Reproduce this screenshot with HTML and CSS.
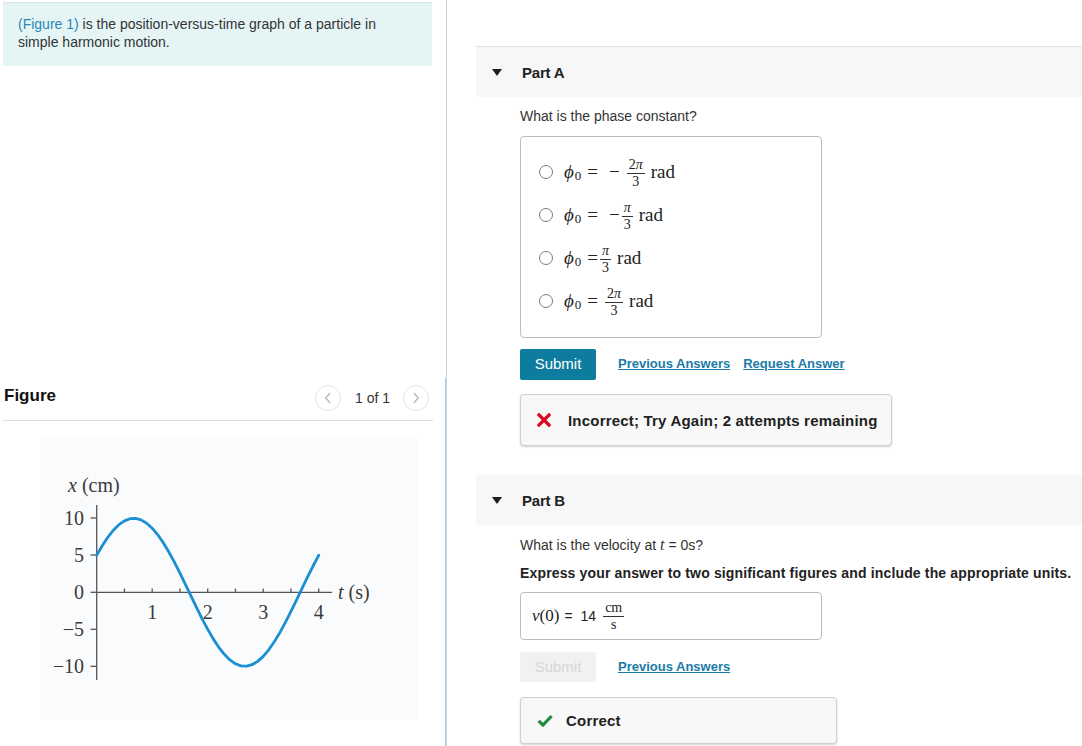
FILE: index.html
```html
<!DOCTYPE html>
<html lang="en">
<head>
<meta charset="utf-8">
<title>Simple harmonic motion</title>
<link rel="stylesheet" href="styles.css">
</head>
<body>
<div class="page">
  <aside class="left">
    <div class="intro"><a class="fig-link">(Figure 1)</a> is the position-versus-time graph of a particle in simple harmonic motion.</div>
    <section class="figure-pane">
      <div class="fig-head">
        <h2 class="fig-title">Figure</h2>
        <div class="pager">
          <span class="pbtn"><svg width="8" height="12" viewBox="0 0 8 12"><path d="M6 1L1.8 6L6 11" fill="none" stroke="#b9b9b9" stroke-width="1.4"/></svg></span>
          <span class="pcount">1 of 1</span>
          <span class="pbtn"><svg width="8" height="12" viewBox="0 0 8 12"><path d="M2 1L6.2 6L2 11" fill="none" stroke="#b9b9b9" stroke-width="1.4"/></svg></span>
        </div>
      </div>
      <div class="fig-img">
        <svg class="graph" width="378" height="283" viewBox="0 0 378 283">
          <g stroke="#555" stroke-width="1.3" fill="none">
            <line x1="56.7" y1="69" x2="56.7" y2="244"/>
            <line x1="56.7" y1="156.3" x2="292" y2="156.3"/>
            <line x1="50.5" y1="82" x2="56.7" y2="82"/>
            <line x1="50.5" y1="119" x2="56.7" y2="119"/>
            <line x1="50.5" y1="156.3" x2="56.7" y2="156.3"/>
            <line x1="50.5" y1="193.3" x2="56.7" y2="193.3"/>
            <line x1="50.5" y1="230.3" x2="56.7" y2="230.3"/>
            <line x1="84.45" y1="152.6" x2="84.45" y2="156.3"/>
            <line x1="112.2" y1="152.6" x2="112.2" y2="156.3"/>
            <line x1="139.95" y1="152.6" x2="139.95" y2="156.3"/>
            <line x1="167.7" y1="152.6" x2="167.7" y2="156.3"/>
            <line x1="195.45" y1="152.6" x2="195.45" y2="156.3"/>
            <line x1="223.2" y1="152.6" x2="223.2" y2="156.3"/>
            <line x1="250.95" y1="152.6" x2="250.95" y2="156.3"/>
            <line x1="278.7" y1="152.6" x2="278.7" y2="156.3"/>
          </g>
          <g class="glabel">
            <text x="44" y="89" text-anchor="end">10</text>
            <text x="44" y="126" text-anchor="end">5</text>
            <text x="44" y="163" text-anchor="end">0</text>
            <text x="44" y="200" text-anchor="end">−5</text>
            <text x="44" y="237" text-anchor="end">−10</text>
            <text x="112.2" y="183" text-anchor="middle">1</text>
            <text x="167.7" y="183" text-anchor="middle">2</text>
            <text x="223.2" y="183" text-anchor="middle">3</text>
            <text x="278.7" y="183" text-anchor="middle">4</text>
            <text x="28" y="56"><tspan font-style="italic">x</tspan> (cm)</text>
            <text x="298" y="163"><tspan font-style="italic">t</tspan> (s)</text>
          </g>
          <polyline fill="none" stroke="#1b8fd2" stroke-width="2.8" stroke-linejoin="round" stroke-linecap="round" points="56.7,119.3 62.25,109.73 67.8,101.31 73.35,94.24 78.9,88.7 84.45,84.82 90,82.71 95.55,82.4 101.1,83.92 106.65,87.21 112.2,92.21 117.75,98.79 123.3,106.79 128.85,116 134.4,126.2 139.95,137.15 145.5,148.57 151.05,160.17 156.6,171.69 162.15,182.82 167.7,193.3 173.25,202.87 178.8,211.29 184.35,218.36 189.9,223.9 195.45,227.78 201,229.89 206.55,230.2 212.1,228.68 217.65,225.39 223.2,220.39 228.75,213.81 234.3,205.81 239.85,196.6 245.4,186.4 250.95,175.45 256.5,164.03 262.05,152.43 267.6,140.91 273.15,129.78 278.7,119.3"/>
        </svg>
      </div>
    </section>
  </aside>

  <main class="right">
    <section class="part part-a">
      <div class="part-head"><span class="caret"></span><span class="part-title">Part A</span></div>
      <div class="part-body">
        <p class="question">What is the phase constant?</p>
        <div class="options">
          <label class="option"><span class="radio"></span>
            <span class="math"><span class="mi">ϕ</span><sub class="sub">0</sub><span class="mo">=</span><span class="mo">−</span><span class="frac"><span class="num">2<i>π</i></span><span class="den">3</span></span><span class="unit">rad</span></span>
          </label>
          <label class="option"><span class="radio"></span>
            <span class="math"><span class="mi">ϕ</span><sub class="sub">0</sub><span class="mo">=</span><span class="mo tight">−</span><span class="frac"><span class="num"><i>π</i></span><span class="den">3</span></span><span class="unit">rad</span></span>
          </label>
          <label class="option"><span class="radio"></span>
            <span class="math"><span class="mi">ϕ</span><sub class="sub">0</sub><span class="mo tight">=</span><span class="frac"><span class="num"><i>π</i></span><span class="den">3</span></span><span class="unit">rad</span></span>
          </label>
          <label class="option"><span class="radio"></span>
            <span class="math"><span class="mi">ϕ</span><sub class="sub">0</sub><span class="mo">=</span><span class="frac"><span class="num">2<i>π</i></span><span class="den">3</span></span><span class="unit">rad</span></span>
          </label>
        </div>
        <div class="actions">
          <button class="btn-submit">Submit</button>
          <a class="link">Previous Answers</a>
          <a class="link">Request Answer</a>
        </div>
        <div class="feedback feedback-wrong">
          <svg class="ficon" width="14" height="14" viewBox="0 0 14 14"><path d="M2 2L12 12M12 2L2 12" stroke="#dc0a1e" stroke-width="3.3" stroke-linecap="square"/></svg>
          <span>Incorrect; Try Again; 2 attempts remaining</span>
        </div>
      </div>
    </section>

    <section class="part part-b">
      <div class="part-head"><span class="caret"></span><span class="part-title">Part B</span></div>
      <div class="part-body">
        <p class="question q-b">What is the velocity at <i class="var">t</i> = 0s?</p>
        <p class="instruct">Express your answer to two significant figures and include the appropriate units.</p>
        <div class="answer-box">
          <span class="math small"><i>v</i>(0)</span><span class="eq">=</span><span class="val">14</span><span class="math small"><span class="frac ufrac"><span class="num">cm</span><span class="den">s</span></span></span>
        </div>
        <div class="actions actions-b">
          <button class="btn-submit disabled">Submit</button>
          <a class="link">Previous Answers</a>
        </div>
        <div class="feedback feedback-ok">
          <svg class="ficon" width="16" height="13" viewBox="0 0 16 13"><path d="M1.6 6.8L6 11L14.6 2" fill="none" stroke="#1f8a3e" stroke-width="3.2"/></svg>
          <span>Correct</span>
        </div>
      </div>
    </section>
  </main>
</div>
</body>
</html>
```

FILE: styles.css
```css
* { box-sizing: border-box; }
html, body { margin: 0; padding: 0; }
body {
  font-family: "Liberation Sans", Arial, sans-serif;
  font-size: 14px;
  color: #333;
  background: #fff;
}
.page {
  display: flex;
  height: 746px;
  overflow: hidden;
}

/* ---------- left pane ---------- */
.left {
  width: 447px;
  flex: none;
  border-right: 1px solid #c4d4e3;
  display: flex;
  flex-direction: column;
}
.intro {
  margin: 2px 14px 0 3px;
  border-top: 1px solid #dde3e6;
  background: #e5f5f6;
  padding: 12px 15px 15px 15px;
  line-height: 18px;
  color: #333;
}
.fig-link { color: #2a86b3; }
.figure-pane {
  margin-top: 312px;
  flex: 1;
  box-shadow: inset -1px 0 0 #b4c8da;
}
.fig-head {
  display: flex;
  justify-content: space-between;
  align-items: flex-start;
  height: 43px;
  padding: 8px 4px 0 1px;
  margin: 0 13px 0 3px;
  border-bottom: 1px solid #dcdcdc;
}
.fig-title {
  margin: 0;
  font-size: 17px;
  line-height: 20px;
  font-weight: bold;
  color: #111;
}
.pager {
  display: flex;
  align-items: center;
  gap: 13px;
  margin-top: -1px;
}
.pbtn {
  width: 26px;
  height: 26px;
  border-radius: 50%;
  border: 1px solid #e2e2e2;
  display: flex;
  align-items: center;
  justify-content: center;
}
.pcount { font-size: 14px; color: #333; padding-left: 1px; }
.fig-img {
  margin: 15px 0 0 40px;
  width: 378px;
  height: 283px;
  background: #fafbfd;
}
.graph { display: block; }
.glabel text {
  font-family: "Liberation Serif", "Times New Roman", serif;
  font-size: 20px;
  fill: #3a3a3a;
}

/* ---------- right pane ---------- */
.right {
  flex: 1;
  padding-left: 29px;
}
.part-a { margin-top: 46px; }
.part-b { margin-top: 29px; }
.part-head {
  height: 51px;
  background: #f7f7f7;
  border-top: 1px solid #e2e2e2;
  display: flex;
  align-items: center;
  padding-left: 16px;
}
.part-b .part-head { border-top: none; height: 50px; }
.caret {
  width: 0;
  height: 0;
  border-left: 5px solid transparent;
  border-right: 5px solid transparent;
  border-top: 7px solid #1e1e1e;
  margin-right: 20px;
}
.part-title {
  font-size: 15px;
  font-weight: bold;
  color: #222;
  letter-spacing: -0.2px;
}
.part-body { padding-left: 44px; }
.question {
  margin: 10px 0 0;
  line-height: 18px;
  font-size: 14px;
  color: #333;
}
.question.q-b { margin-top: 11px; }
.var {
  font-family: "Liberation Serif", serif;
  font-size: 16px;
}
.instruct {
  margin: 10px 0 0;
  line-height: 18px;
  font-size: 14px;
  font-weight: bold;
  color: #222;
  letter-spacing: 0.15px;
}

.options {
  margin-top: 11px;
  width: 302px;
  height: 202px;
  border: 1px solid #bdbdbd;
  border-radius: 4px;
  padding: 13px 0 15px 18px;
  display: flex;
  flex-direction: column;
}
.option {
  height: 43px;
  display: flex;
  align-items: center;
  gap: 11px;
}
.radio {
  width: 14px;
  height: 14px;
  border-radius: 50%;
  border: 1.5px solid #7b7b7b;
  background: #fff;
  flex: none;
}

.math {
  font-family: "Liberation Serif", "Times New Roman", serif;
  font-size: 19px;
  color: #222;
  display: inline-flex;
  align-items: center;
}
.mi { font-style: italic; }
.sub {
  font-size: 13px;
  vertical-align: baseline;
  position: relative;
  top: 4px;
  margin-left: 1px;
}
.mo { margin: 0 5px 0 6px; }
.mo.tight { margin-right: 0; }
.frac {
  display: inline-flex;
  flex-direction: column;
  align-items: center;
  font-size: 14px;
  line-height: 1;
  margin: 0 5px 0 2px;
  position: relative;
  top: 2px;
}
.frac .num {
  border-bottom: 1px solid #333;
  padding: 0 2px 1px;
}
.frac .den { padding-top: 1px; }
.unit { margin-left: 1px; }

.actions {
  margin-top: 11px;
  display: flex;
  align-items: center;
}
.btn-submit {
  width: 76px;
  height: 31px;
  border: none;
  border-radius: 2px;
  background: #0e7c9e;
  color: #fff;
  font-family: "Liberation Sans", Arial, sans-serif;
  font-size: 15px;
  padding: 0 0 2px;
  margin-right: 22px;
}
.btn-submit.disabled {
  height: 30px;
  background: #f1f1f1;
  color: #d6d6d6;
}
.link {
  font-size: 13px;
  font-weight: bold;
  color: #1b7ba8;
  text-decoration: underline;
  margin-right: 13px;
  position: relative;
  top: -1px;
}
.feedback {
  margin-top: 14px;
  height: 52px;
  width: 372px;
  border: 1px solid #cfcfcf;
  border-radius: 4px;
  background: #f8f8f8;
  box-shadow: 0 1px 2px rgba(0,0,0,0.18);
  display: flex;
  align-items: center;
  padding-left: 16px;
  font-size: 15px;
  font-weight: bold;
  color: #222;
  letter-spacing: 0.2px;
}
.feedback-wrong .ficon { margin-right: 17px; }
.feedback-ok {
  margin-top: 15px;
  width: 317px;
  height: 47px;
}
.feedback-ok .ficon { margin-right: 13px; }

.answer-box {
  margin-top: 10px;
  width: 302px;
  height: 48px;
  border: 1px solid #bdbdbd;
  border-radius: 4px;
  display: flex;
  align-items: center;
  padding-left: 11px;
  font-size: 14px;
  color: #222;
}
.math.small { font-size: 17px; }
.eq { margin: 0 8px 0 5px; }
.val { margin-right: 5px; }
.ufrac { font-size: 14px; top: 0; }
.actions-b { margin-top: 12px; }
```
